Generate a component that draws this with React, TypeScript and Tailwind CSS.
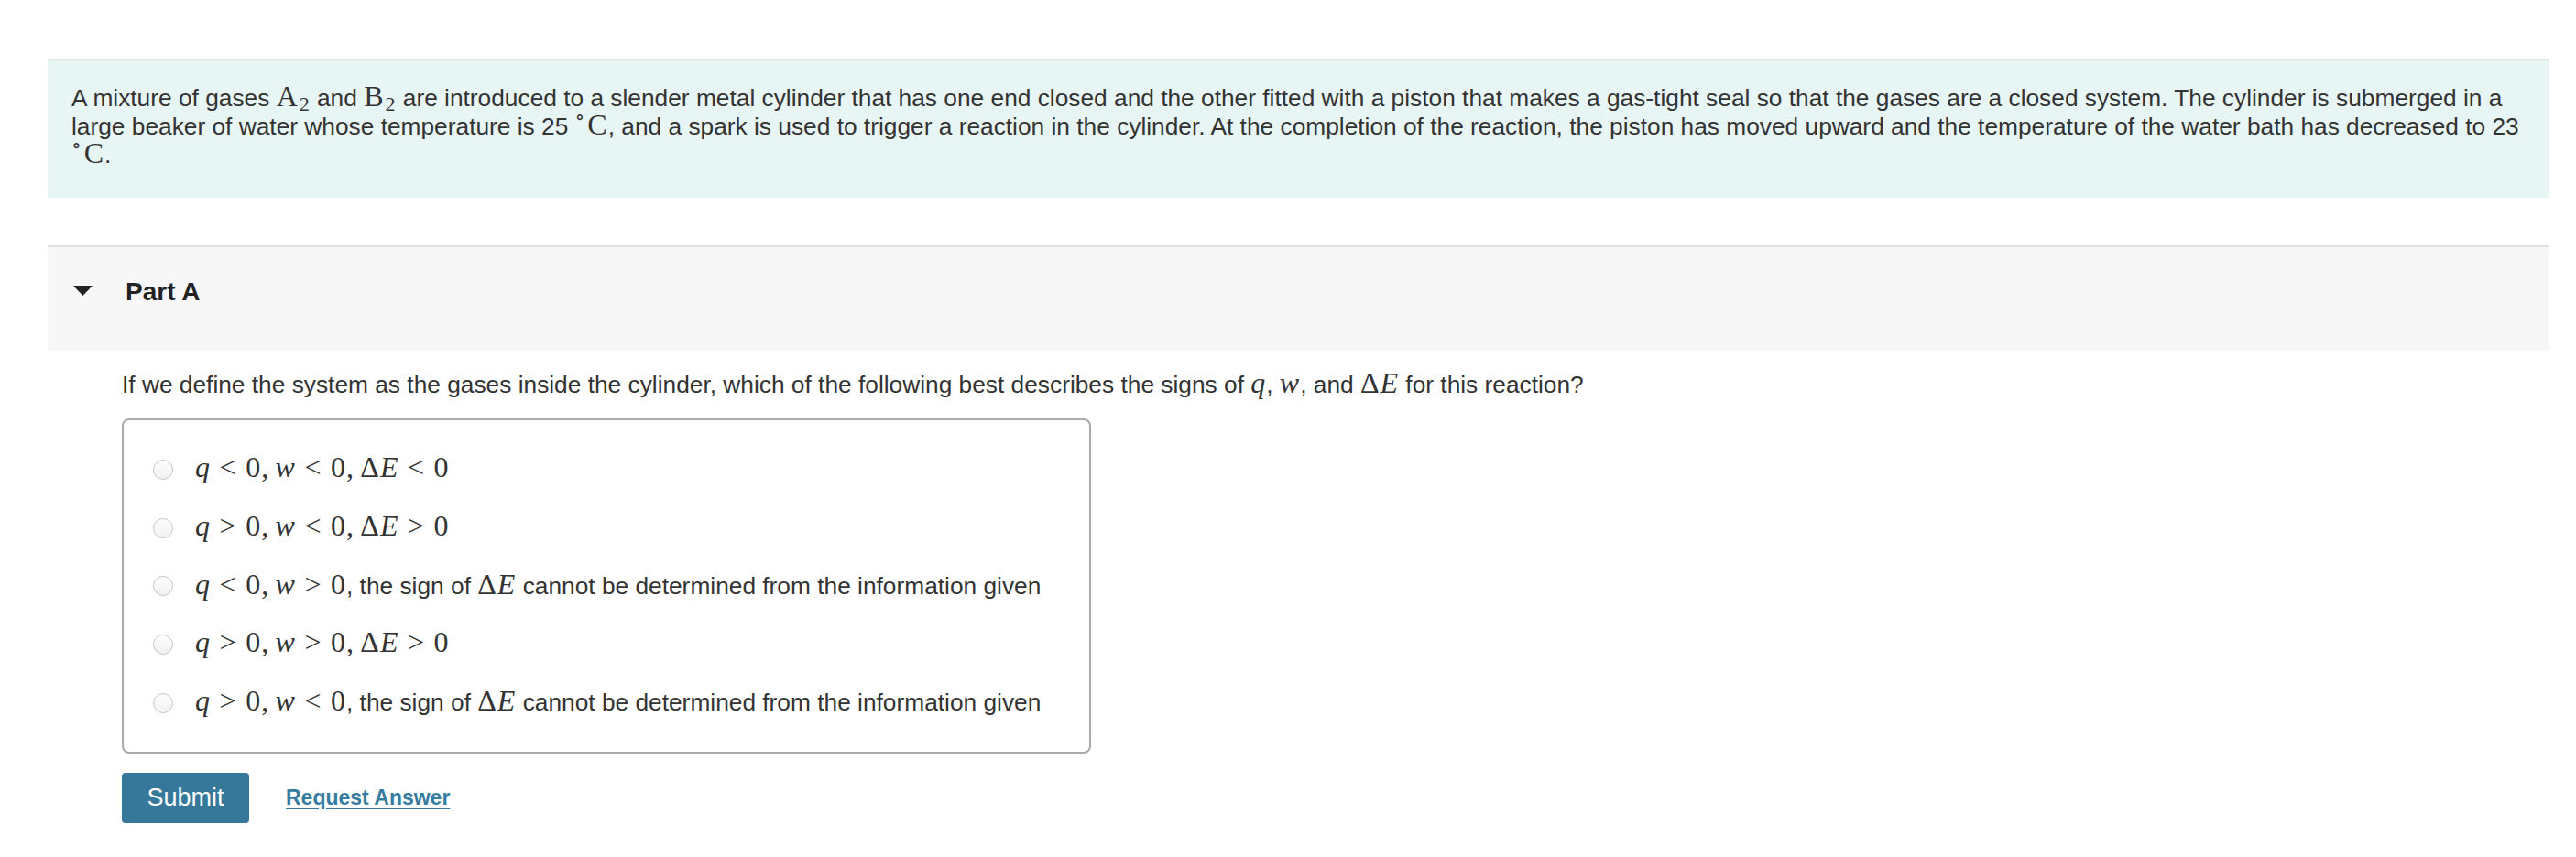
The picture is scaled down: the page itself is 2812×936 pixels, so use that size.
import React from 'react';

const sans = "font-['Liberation_Sans',Arial,sans-serif]";
const serif = "font-['Liberation_Serif','DejaVu_Serif',serif]";

const V = ({ children }: { children: React.ReactNode }) => <i>{children}</i>;
const Rel = ({ children }: { children: React.ReactNode }) => (
  <span className="mx-[0.3em]">{children}</span>
);
const Comma = () => <span className="mr-[0.2em]">,</span>;

const Math = ({ children }: { children: React.ReactNode }) => (
  <span className={`${serif} text-[32px] tracking-[0.03em] leading-[0] whitespace-nowrap`}>{children}</span>
);

const DeltaE = () => (
  <>
    Δ<V>E</V>
  </>
);

const Sub2 = ({ base }: { base: string }) => (
  <Math>
    {base}
    <span className="text-[22px] relative top-[5px] ml-[1px]">2</span>
  </Math>
);

const Degree = () => (
  <Math>
    <span className="text-[22px] relative -top-[12px] mr-[2px]">∘</span>C
  </Math>
);

type Sign = '<' | '>';

const Signs = ({ q, w }: { q: Sign; w: Sign }) => (
  <Math>
    <V>q</V>
    <Rel>{q}</Rel>0<Comma />
    <V>w</V>
    <Rel>{w}</Rel>0
  </Math>
);

const options: { q: Sign; w: Sign; e: Sign | null }[] = [
  { q: '<', w: '<', e: '<' },
  { q: '>', w: '<', e: '>' },
  { q: '<', w: '>', e: null },
  { q: '>', w: '>', e: '>' },
  { q: '>', w: '<', e: null },
];

export default function App() {
  return (
    <div className={`${sans} bg-white text-[#333] w-[2812px] h-[936px] overflow-hidden pt-[64px]`}>
      {/* Intro */}
      <div className="ml-[52px] mr-[30px] border-t-2 border-[#e0e0e0] bg-[#e8f5f5] pl-[26px] pr-[30px] pt-[26px] pb-[31px] text-[26.3px] leading-[31px]">
        A mixture of gases <Sub2 base="A" /> and <Sub2 base="B" /> are introduced to a slender metal cylinder that
        has one end closed and the other fitted with a piston that makes a gas-tight seal so that the gases are a
        closed system. The cylinder is submerged in a large beaker of water whose temperature is 25 <Degree />, and a
        spark is used to trigger a reaction in the cylinder. At the completion of the reaction, the piston has moved
        upward and the temperature of the water bath has decreased to 23 <Degree />.
      </div>

      {/* Part A header */}
      <div className="ml-[52px] mr-[30px] mt-[52px] border-t-2 border-[#e0e0e0] bg-[#f7f7f7] h-[115px] flex items-start pt-[33px]">
        <svg width="21" height="11" viewBox="0 0 21 11" className="ml-[28px] mt-[9px]">
          <path d="M0 0 L21 0 L10.5 11 Z" fill="#222" />
        </svg>
        <span className="ml-[36px] text-[28px] leading-[31px] font-bold text-[#222]">Part A</span>
      </div>

      {/* Question */}
      <div className="pl-[133px]">
        <p className="mt-[22px] text-[26.3px] leading-[31px]">
          If we define the system as the gases inside the cylinder, which of the following best describes the signs
          of{' '}
          <Math>
            <V>q</V>
          </Math>
          ,{' '}
          <Math>
            <V>w</V>
          </Math>
          , and{' '}
          <Math>
            <DeltaE />
          </Math>{' '}
          for this reaction?
        </p>

        <div className="mt-[21px] w-[1058px] h-[366px] border-2 border-[#aaa] rounded-[8px] pt-[22px] flex flex-col">
          {options.map((o, i) => (
            <label key={i} className="h-[63.7px] flex items-center text-[26.3px]">
              <span className="ml-[32px] w-[22px] h-[22px] rounded-full border border-[#c8c8c8] bg-gradient-to-b from-white to-[#f0f0f0] shrink-0" />
              <span className="ml-[24px] whitespace-nowrap">
                <Signs q={o.q} w={o.w} />
                {o.e ? (
                  <Math>
                    <Comma />
                    <DeltaE />
                    <Rel>{o.e}</Rel>0
                  </Math>
                ) : (
                  <>
                    , the sign of{' '}
                    <Math>
                      <DeltaE />
                    </Math>{' '}
                    cannot be determined from the information given
                  </>
                )}
              </span>
            </label>
          ))}
        </div>

        <div className="mt-[21px] flex items-center">
          <button className="w-[139px] h-[55px] rounded-[4px] bg-[#357899] text-white text-[27px]">Submit</button>
          <a href="#" className="ml-[40px] text-[23px] font-bold text-[#377ca0] underline underline-offset-[3px]">
            Request Answer
          </a>
        </div>
      </div>
    </div>
  );
}
